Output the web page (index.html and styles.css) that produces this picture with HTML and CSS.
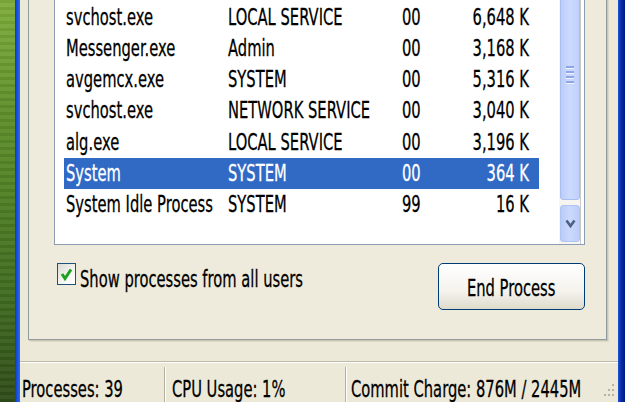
FILE: index.html
```html
<!DOCTYPE html>
<html>
<head>
<meta charset="utf-8">
<link rel="stylesheet" href="styles.css">
</head>
<body>
<div class="screen">
  <div class="desktop"></div>
  <div class="frame-l"></div>
  <div class="window">
    <div class="tabpanel">
      <div class="list">
        <div class="rows">
          <div class="row"><span class="t">svchost.exe</span><span class="t">LOCAL SERVICE</span><span class="t">00</span><span class="t r">6,648 K</span></div>
          <div class="row"><span class="t">Messenger.exe</span><span class="t">Admin</span><span class="t">00</span><span class="t r">3,168 K</span></div>
          <div class="row"><span class="t">avgemcx.exe</span><span class="t">SYSTEM</span><span class="t">00</span><span class="t r">5,316 K</span></div>
          <div class="row"><span class="t">svchost.exe</span><span class="t">NETWORK SERVICE</span><span class="t">00</span><span class="t r">3,040 K</span></div>
          <div class="row"><span class="t">alg.exe</span><span class="t">LOCAL SERVICE</span><span class="t">00</span><span class="t r">3,196 K</span></div>
          <div class="row sel"><span class="t">System</span><span class="t">SYSTEM</span><span class="t">00</span><span class="t r">364 K</span></div>
          <div class="row"><span class="t">System Idle Process</span><span class="t">SYSTEM</span><span class="t">99</span><span class="t r">16 K</span></div>
        </div>
        <div class="scrollbar">
          <div class="thumb"><div class="grip"><i></i><i></i><i></i><i></i></div></div>
          <div class="sbbtn">
            <svg width="11" height="9" viewBox="0 0 11 9"><polyline points="1.5,1.5 5.5,7 9.5,1.5" fill="none" stroke="#4d6185" stroke-width="2.6"/></svg>
          </div>
        </div>
      </div>
      <div class="controls">
        <div class="check">
          <span class="box">
            <svg width="15" height="16" viewBox="0 0 15 16"><polyline points="3,8 6,12.5 12,3.5" fill="none" stroke="#21a121" stroke-width="3"/></svg>
          </span>
          <span class="t label">Show processes from all users</span>
        </div>
        <div class="btn"><span class="t tc">End Process</span></div>
      </div>
    </div>
    <div class="status">
      <div class="pane p1"><span class="t">Processes: 39</span></div>
      <div class="pane p2"><span class="t">CPU Usage: 1%</span></div>
      <div class="pane p3"><span class="t">Commit Charge: 876M / 2445M</span></div>
      <div class="resize">
        <svg width="16" height="18" viewBox="0 0 16 18">
          <rect x="12" y="2" width="2" height="2" fill="#b8b4a2"/>
          <rect x="8" y="7" width="2" height="2" fill="#b8b4a2"/>
          <rect x="12" y="7" width="2" height="2" fill="#b8b4a2"/>
          <rect x="4" y="12" width="2" height="2" fill="#b8b4a2"/>
          <rect x="8" y="12" width="2" height="2" fill="#b8b4a2"/>
          <rect x="12" y="12" width="2" height="2" fill="#b8b4a2"/>
        </svg>
      </div>
    </div>
  </div>
  <div class="frame-r"></div>
  <div class="edge"></div>
</div>
</body>
</html>
```

FILE: styles.css
```css
html, body {
  margin: 0;
  background: #fff;
}
body {
  font-family: "DejaVu Sans", "Liberation Sans", sans-serif;
  font-size: 23px;
  color: #000;
}
.screen {
  display: flex;
  width: 628px;
  height: 402px;
  overflow: hidden;
}
.desktop {
  flex: 0 0 15px;
  background:
    repeating-linear-gradient(0deg, rgba(0,0,0,0.06) 0 3px, rgba(255,255,255,0.04) 3px 7px),
    linear-gradient(#7fae3c, #62922c 25%, #4f7f24 50%, #3f6a20 75%, #2f4c18);
}
.frame-l {
  flex: 0 0 5px;
  background: linear-gradient(to right, #0a3bc9, #2a6cf0);
}
.window {
  flex: 1 1 0;
  min-width: 0;
  display: flex;
  flex-direction: column;
  background: #ece9d8;
}
.frame-r {
  flex: 0 0 7px;
  background: linear-gradient(to right, #1d52d6, #0a2ca0 45%, #001b86);
}
.edge {
  flex: 0 0 3px;
  background: #fff;
}
.tabpanel {
  margin: -30px 11px 0 8px;
  height: 370px;
  box-sizing: border-box;
  border: 1px solid #919b9c;
  box-shadow: 1px 1px 0 #c9c6b6, 2px 2px 0 #dcd9c9;
  padding: 5px 21px 0 25px;
  background: #eeebdc;
}
.list {
  height: 269px;
  box-sizing: border-box;
  border: 1px solid #8c9cb3;
  background: #fff;
  display: flex;
}
.rows {
  flex: 1 1 0;
  min-width: 0;
  padding: 24.5px 20px 0 9px;
}
.row {
  display: grid;
  grid-template-columns: 162px 174px 30px minmax(0, 1fr);
  height: 31.3px;
  line-height: 31.3px;
  padding: 0 10px 0 2px;
}
.row.sel {
  background: #316ac5;
  color: #fff;
}
.t {
  display: inline-block;
  white-space: nowrap;
  transform: scaleX(0.64);
  transform-origin: 0 50%;
  -webkit-text-stroke: 0.3px currentColor;
}
.t.r {
  text-align: right;
  transform-origin: 100% 50%;
}
.t.tc {
  transform-origin: 50% 50%;
}
.scrollbar {
  flex: 0 0 25px;
  box-sizing: border-box;
  padding: 0 4px 2px 1px;
  display: flex;
  flex-direction: column;
  background: #f6f5f0;
  box-shadow: inset -3px 0 0 #fff, inset -4px 0 0 #c9c9c9;
}
.thumb {
  flex: 1;
  margin-bottom: 5px;
  box-sizing: border-box;
  border: 1px solid #a8bdf2;
  border-radius: 0 0 3px 3px;
  background: linear-gradient(to right, #bccdf9, #ccdafd 50%, #bfd0fa);
}
.grip {
  margin: 88px auto 0;
  width: 8px;
  display: flex;
  flex-direction: column;
  gap: 3px;
}
.grip i {
  display: block;
  height: 2px;
  background: #8ea6e6;
  box-shadow: 0 1px 0 #eef3ff;
}
.sbbtn {
  flex: 0 0 37px;
  box-sizing: border-box;
  border: 1px solid #b0c4f5;
  border-radius: 3px;
  background: linear-gradient(to right, #bacbf8, #cbd9fc 50%, #bccdf9);
  display: flex;
  align-items: center;
  justify-content: center;
}
.controls {
  display: flex;
  justify-content: space-between;
  align-items: flex-start;
  margin-top: 18px;
  padding-left: 3px;
}
.check {
  flex: 1 1 0;
  min-width: 0;
  display: flex;
  align-items: flex-start;
  gap: 4px;
}
.box {
  flex: 0 0 19px;
  height: 22px;
  box-sizing: border-box;
  border: 1px solid #1c5180;
  background: linear-gradient(135deg, #dcdcd5, #f6f6f3 60%, #fff);
  display: flex;
  align-items: center;
  justify-content: center;
}
.label {
  line-height: 27px;
  margin-top: 2.5px;
}
.btn {
  flex: 0 0 147px;
  height: 47px;
  box-sizing: border-box;
  border: 1px solid #003c74;
  border-radius: 5px;
  background: linear-gradient(#ffffff, #f4f3ee 60%, #dedbcc);
  line-height: 27px;
  padding-top: 3px;
  display: flex;
  align-items: center;
  justify-content: center;
}
.status {
  margin-top: auto;
  height: 41px;
  box-sizing: border-box;
  border-top: 1px solid #bcb9a8;
  box-shadow: inset 0 1px 0 #fff;
  padding-top: 5px;
  display: flex;
}
.pane {
  box-sizing: border-box;
  line-height: 25px;
  padding-top: 9.5px;
  min-width: 0;
}
.p1 {
  flex: 0 0 145px;
  padding-left: 2px;
  border-right: 1px solid #b4b09e;
}
.p2 {
  flex: 0 0 181px;
  padding-left: 6px;
  border-left: 1px solid #fff;
  border-right: 1px solid #b4b09e;
}
.p3 {
  flex: 1 1 0;
  padding-left: 4px;
  border-left: 1px solid #fff;
}
.resize {
  flex: 0 0 18px;
  display: flex;
  align-items: flex-end;
  padding-bottom: 2px;
}
```
